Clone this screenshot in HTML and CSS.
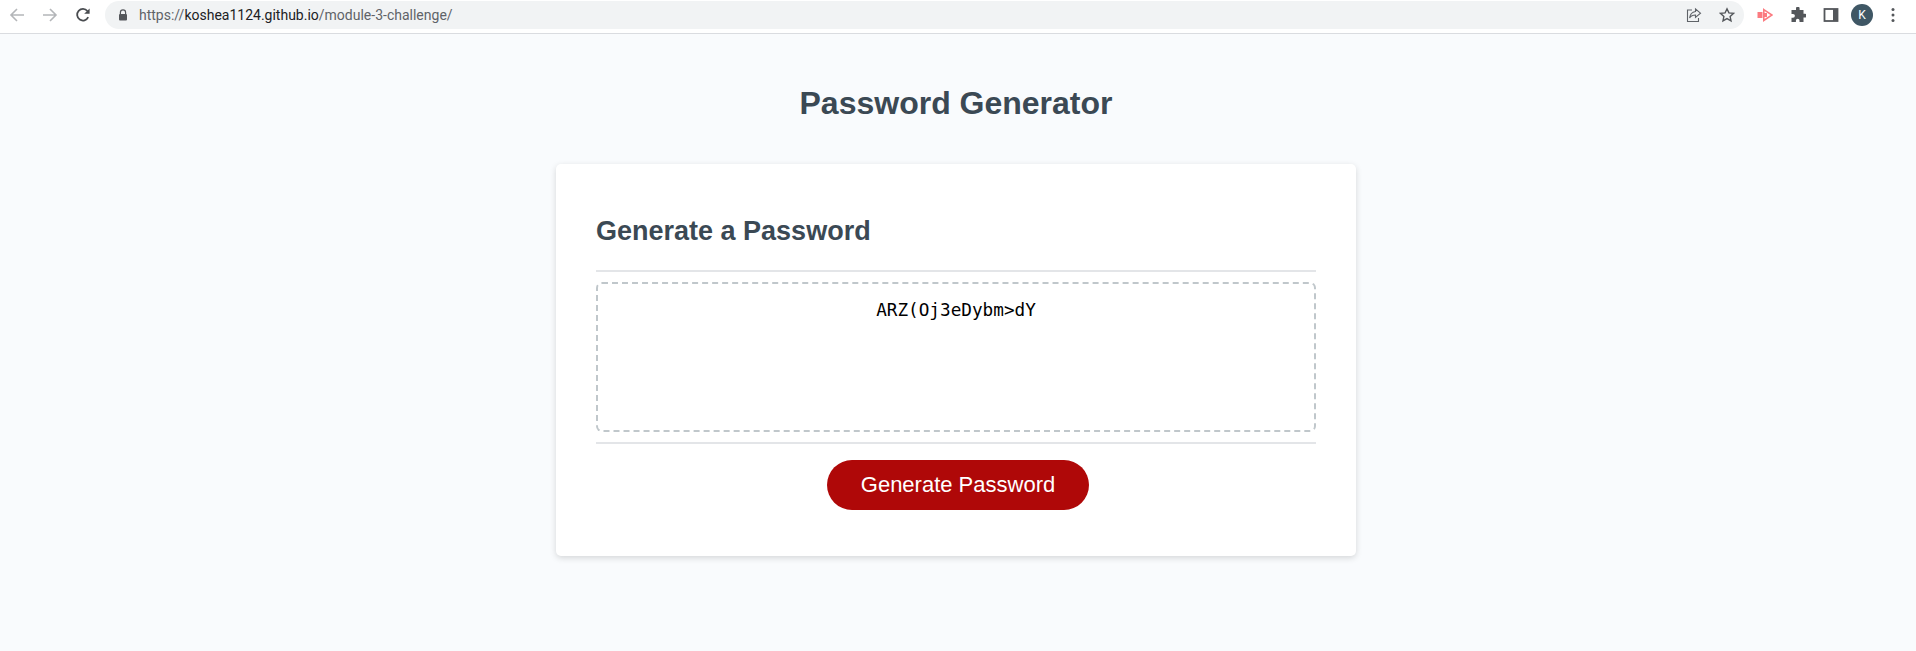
FILE: index.html
```html
<!DOCTYPE html>
<html lang="en">
<head>
  <meta charset="UTF-8">
  <meta name="viewport" content="width=device-width, initial-scale=1.0">
  <title>Password Generator</title>
  <link rel="stylesheet" href="styles.css">
</head>
<body>
  <!-- browser toolbar -->
  <div class="toolbar">
    <svg class="nav-icon" viewBox="0 0 16 16"><path d="M15 8H2.500M8 2L2 8l6 6" fill="none" stroke="#b4b6b9" stroke-width="1.600"/></svg>
    <svg class="nav-icon" viewBox="0 0 16 16"><path d="M1 8h12.500M8 2l6 6-6 6" fill="none" stroke="#b4b6b9" stroke-width="1.600"/></svg>
    <svg class="nav-icon" viewBox="0 0 16 16"><path d="M13.200 10.200A5.800 5.800 0 1 1 12.400 4" fill="none" stroke="#494c50" stroke-width="1.800"/><path d="M14.600 1.400v5.400H9.200z" fill="#494c50"/></svg>
    <div class="omnibox">
      <svg class="lock" viewBox="0 0 10 12"><path d="M2.400 5V3.400a2.600 2.600 0 0 1 5.200 0V5" fill="none" stroke="#54575b" stroke-width="1.200"/><rect x="1" y="5" width="8" height="6.400" rx="1" fill="#54575b"/></svg>
      <span class="url"><span class="url-dim">https://</span>koshea1124.github.io<span class="url-dim">/module-3-challenge/</span></span>
      <div class="omni-end">
        <svg class="tool-icon" viewBox="0 0 16 16"><path d="M9.500 2l5 4.200-5 4.200V8C6.500 8 4.800 9 3.600 11 4 7.500 6 5 9.500 4.500z" fill="none" stroke="#5f6368" stroke-width="1.100"/><path d="M6 3H1.500v11.500h11V11" fill="none" stroke="#5f6368" stroke-width="1.100"/></svg>
        <svg class="tool-icon" viewBox="0 0 16 16"><path d="M8 1.800l1.900 4.100 4.500.5-3.300 3 .9 4.400L8 11.600l-4 2.200.9-4.400-3.300-3 4.500-.5z" fill="none" stroke="#54575b" stroke-width="1.400"/></svg>
      </div>
    </div>
    <div class="tools">
      <svg class="tool-icon" viewBox="0 0 16 16"><path d="M6.800 2.600L15 8l-8.200 5.400z" fill="#fff" stroke="#fb7b80" stroke-width="1.600"/><path d="M.5 5h5v6h-5z" fill="#fb7b80"/><path d="M6.500 6h3.500v4H6.500z" fill="#fb7b80"/></svg>
      <svg class="tool-icon" viewBox="0 0 16 16"><path d="M6 1.500a1.800 1.800 0 0 1 3.600 0V3H13.500v3.700H15a1.900 1.900 0 0 1 0 3.800h-1.500V15H9.500v-1.400a1.800 1.800 0 0 0-3.600 0V15H1.500v-4.300H3a1.900 1.900 0 0 0 0-3.800H1.500V3H6z" fill="#54575b"/></svg>
      <svg class="tool-icon" viewBox="0 0 16 16"><rect x="1.500" y="2" width="13" height="12" fill="none" stroke="#54575b" stroke-width="1.800"/><rect x="10" y="2" width="5" height="12" fill="#54575b"/></svg>
      <div class="avatar">K</div>
      <svg class="menu-icon" viewBox="0 0 4 16"><circle cx="2" cy="2.500" r="1.500"/><circle cx="2" cy="8" r="1.500"/><circle cx="2" cy="13.500" r="1.500"/></svg>
    </div>
  </div>

  <div class="page">
    <h1>Password Generator</h1>
    <div class="card">
      <div class="card-header">
        <h2>Generate a Password</h2>
      </div>
      <div class="card-body">
        <textarea readonly class="password" aria-label="Generated Password">ARZ(Oj3eDybm&gt;dY</textarea>
      </div>
      <div class="card-footer">
        <button class="btn">Generate Password</button>
      </div>
    </div>
  </div>
</body>
</html>
```

FILE: styles.css
```css
* {
  box-sizing: border-box;
}
html, body {
  margin: 0;
  padding: 0;
  height: 100%;
}
body {
  font-family: "Liberation Sans", Arial, sans-serif;
  background-color: #f9fbfd;
  overflow: hidden;
}

/* browser toolbar */
.toolbar {
  display: flex;
  align-items: center;
  height: 34px;
  padding: 0 0 4px 9px;
  background-color: #fff;
  border-bottom: 1px solid #dadce0;
}
.nav-icon {
  width: 16px;
  height: 16px;
  margin-right: 17px;
  flex: none;
}
.omnibox {
  display: flex;
  align-items: center;
  flex: 1;
  height: 28px;
  margin-left: -3px;
  padding: 0 9px 0 13px;
  background-color: #f1f3f4;
  border-radius: 14px;
}
.lock {
  width: 10px;
  height: 12px;
  margin-right: 11px;
}
.url {
  font-family: "Roboto", "Liberation Sans", sans-serif;
  font-size: 14px;
  color: #202124;
}
.url-dim {
  color: #5f6368;
}
.omni-end {
  display: flex;
  align-items: center;
  gap: 17px;
  margin-left: auto;
}
.tool-icon {
  width: 16px;
  height: 16px;
  flex: none;
}
.tools {
  display: flex;
  align-items: center;
  gap: 17px;
  padding: 0 21px 0 13px;
}
.avatar {
  width: 22px;
  height: 22px;
  margin-left: -5px;
  border-radius: 50%;
  background-color: #3f5765;
  color: #fff;
  font-family: "Roboto", sans-serif;
  font-size: 12px;
  line-height: 22px;
  text-align: center;
}
.menu-icon {
  width: 4px;
  height: 16px;
  margin-left: 1px;
  fill: #54575b;
}

/* page */
.page {
  padding-right: 4px;
}
h1 {
  margin: 50px 0 0;
  font-size: 32px;
  line-height: 38px;
  color: hsl(206, 17%, 28%);
  text-align: center;
}
.card {
  width: 800px;
  margin: 42px auto 0;
  padding: 40px 40px 46px;
  background-color: #fff;
  border-radius: 5px;
  box-shadow: rgba(0, 0, 0, 0.15) 0 2px 6px 0;
  color: hsl(206, 17%, 28%);
}
.card-header {
  padding: 11px 0 23px;
  border-bottom: 2px solid hsl(216, 9%, 90%);
}
h2 {
  margin: 0;
  font-size: 27px;
  line-height: 32px;
}
.card-body {
  padding: 10px 0;
  border-bottom: 2px solid hsl(216, 9%, 90%);
}
.password {
  display: block;
  width: 100%;
  height: 150px;
  padding: 16px 14px 14px;
  font-family: "DejaVu Sans Mono", monospace;
  font-size: 17.700px;
  color: #000;
  text-align: center;
  border: 2px dashed #c0c7cb;
  border-radius: 6px;
  outline: none;
  resize: none;
}
.card-footer {
  padding: 16px 0 0 4px;
  text-align: center;
}
.btn {
  width: 262px;
  height: 50px;
  padding: 0;
  font-family: "Liberation Sans", Arial, sans-serif;
  font-size: 22px;
  color: #fff;
  background-color: hsl(360, 91%, 36%);
  border: 0;
  border-radius: 25px;
  cursor: pointer;
}
```
